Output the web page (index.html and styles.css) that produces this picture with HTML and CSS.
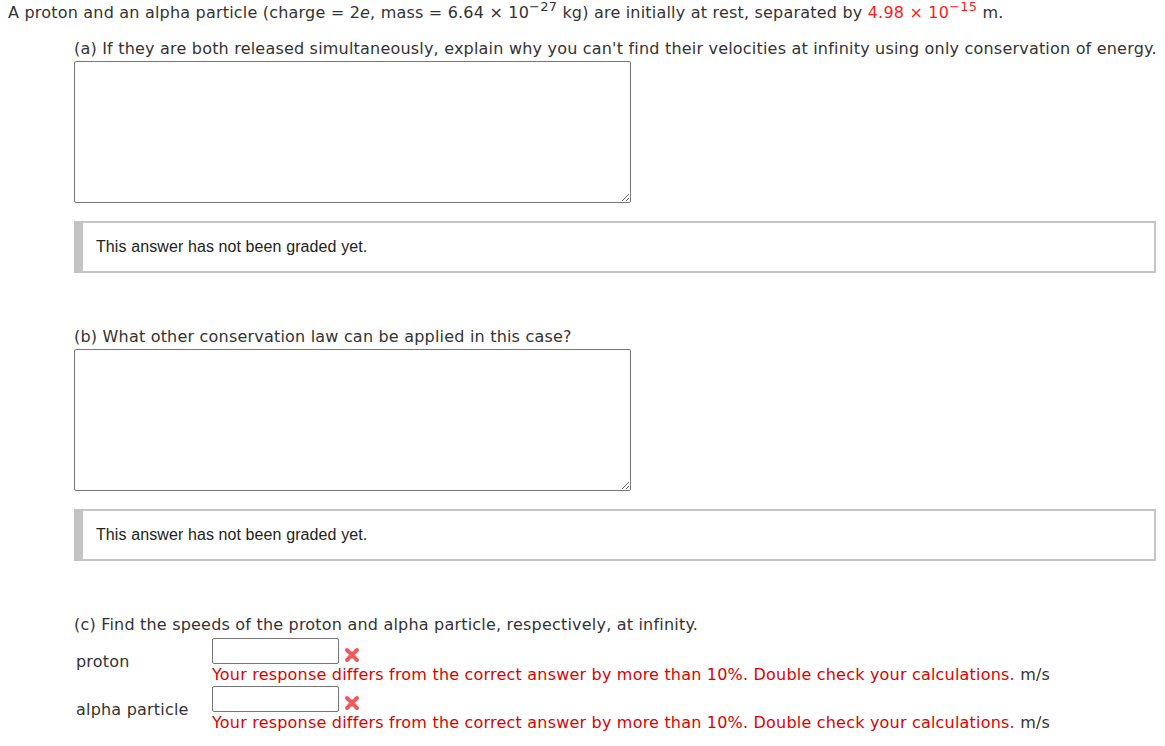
FILE: index.html
```html
<!DOCTYPE html>
<html lang="en">
<head>
    <meta charset="UTF-8">
    <title>Question</title>
    <link rel="stylesheet" href="styles.css">
</head>
<body>
    <p class="intro">A proton and an alpha particle (charge = 2<i>e</i>, mass = 6.64 &times; 10<sup>&minus;27</sup> kg) are initially at rest, separated by <span class="given">4.98 &times; 10<sup>&minus;15</sup></span> m.</p>

    <div class="part">
        <p class="prompt">(a) If they are both released simultaneously, explain why you can't find their velocities at infinity using only conservation of energy.</p>
        <textarea class="essay"></textarea>
        <div class="grade">This answer has not been graded yet.</div>
    </div>

    <div class="part">
        <p class="prompt">(b) What other conservation law can be applied in this case?</p>
        <textarea class="essay"></textarea>
        <div class="grade">This answer has not been graded yet.</div>
    </div>

    <div class="part part-c">
        <p class="prompt">(c) Find the speeds of the proton and alpha particle, respectively, at infinity.</p>
        <div class="answers">
            <div class="row">
                <span class="name">proton</span>
                <div class="field">
                    <div class="entry">
                        <input type="text">
                        <svg class="wrong" width="18" height="18" viewBox="0 0 18 18"><path d="M4 4 L14 14 M14 4 L4 14" stroke="#ef5b5b" stroke-width="4" stroke-linecap="round"/></svg>
                    </div>
                    <div class="feedback"><span class="err">Your response differs from the correct answer by more than 10%. Double check your calculations.</span> m/s</div>
                </div>
            </div>
            <div class="row">
                <span class="name">alpha particle</span>
                <div class="field">
                    <div class="entry">
                        <input type="text">
                        <svg class="wrong" width="18" height="18" viewBox="0 0 18 18"><path d="M4 4 L14 14 M14 4 L4 14" stroke="#ef5b5b" stroke-width="4" stroke-linecap="round"/></svg>
                    </div>
                    <div class="feedback"><span class="err">Your response differs from the correct answer by more than 10%. Double check your calculations.</span> m/s</div>
                </div>
            </div>
        </div>
    </div>
</body>
</html>
```

FILE: styles.css
```css
html, body {
    background-color: #ffffff;
}

body {
    margin: 0 8px;
    color: #333333;
    font-family: "DejaVu Sans", Verdana, sans-serif;
    font-size: 16px;
    letter-spacing: 0.2px;
}

.intro {
    margin: 2px 0 0 0;
    line-height: 22px;
}

.intro sup {
    font-size: 13px;
    line-height: 0;
    vertical-align: 7px;
}

.given {
    color: #ff1a1a;
}

.part {
    margin-left: 66px;
}

.prompt {
    margin: 15px 0 2px 0;
    line-height: 20px;
}

.essay {
    display: block;
    width: 557px;
    height: 142px;
    box-sizing: border-box;
    border: 1px solid #767676;
    border-radius: 2px;
    margin: 0;
}

.grade {
    margin-top: 18px;
    margin-right: 1px;
    height: 52px;
    box-sizing: border-box;
    border: 2px solid #c4c4c4;
    border-left: 9px solid #c4c4c4;
    padding-left: 13px;
    display: flex;
    align-items: center;
    font-family: "Liberation Sans", Arial, sans-serif;
    font-size: 16px;
    letter-spacing: 0.1px;
    color: #222222;
}

.part + .part .prompt {
    margin-top: 54px;
}

.part-c .prompt {
    margin-top: 55px;
}

.answers {
    margin-top: 3px;
}

.row {
    display: flex;
    align-items: center;
    margin-bottom: 1px;
}

.name {
    width: 138px;
    padding-left: 2px;
    box-sizing: border-box;
}

.entry {
    display: flex;
    align-items: flex-end;
}

.entry input {
    width: 127px;
    height: 26px;
    box-sizing: border-box;
    margin: 0;
    border: 1px solid #767676;
    border-radius: 2px;
}

.wrong {
    margin-left: 4px;
}

.feedback {
    padding-top: 1px;
    line-height: 20px;
}

.err {
    color: #e00000;
}
```
